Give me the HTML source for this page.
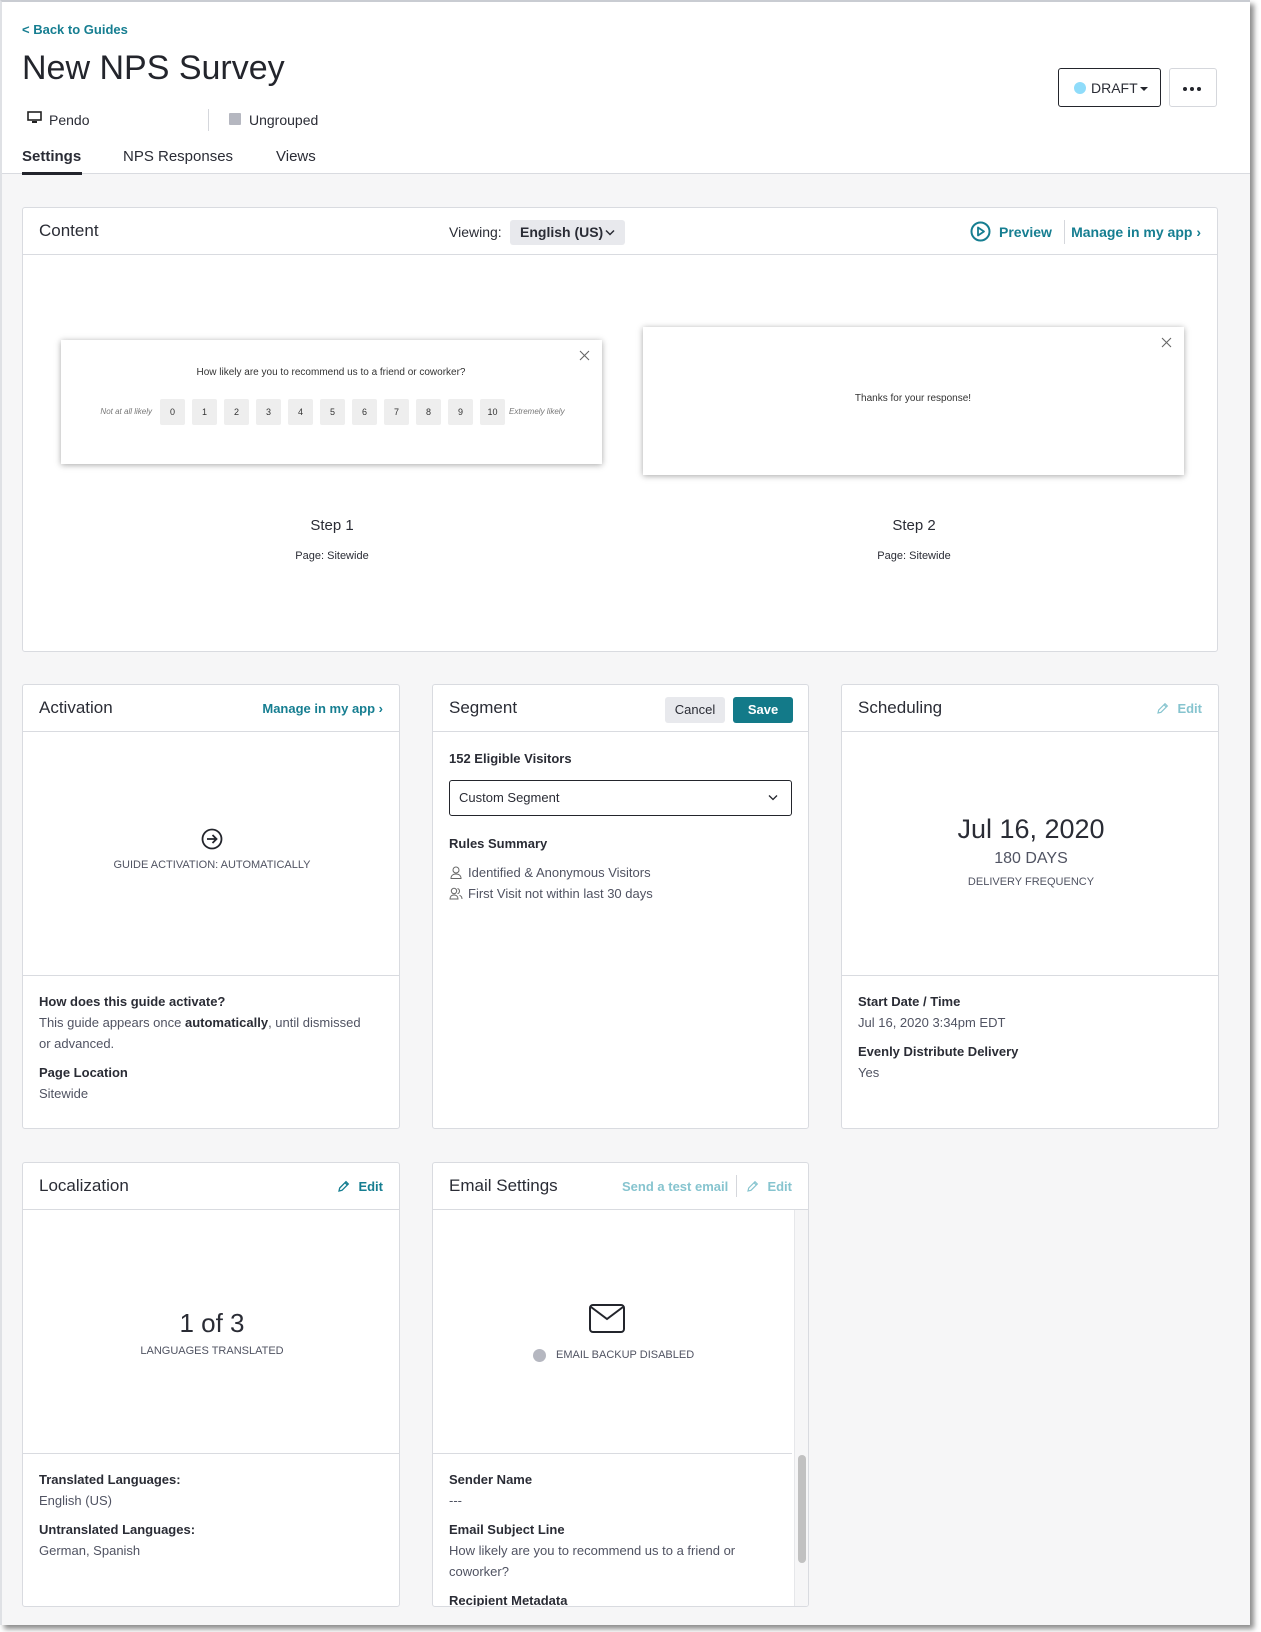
<!DOCTYPE html>
<html><head><meta charset="utf-8"><style>
*{margin:0;padding:0;box-sizing:border-box}
body{width:1261px;height:1632px;background:#fff;font-family:"Liberation Sans",sans-serif;color:#2a2c35;position:relative;overflow:hidden}
#frame{position:absolute;left:0;top:0;width:1250px;height:1625px;background:#f6f6f7;border-top:2px solid #c9ccd2;border-left:2px solid #dfe1e5;box-shadow:4px 4px 5px rgba(0,0,0,.45);overflow:hidden}
#hdr{position:absolute;left:0;top:0;width:100%;height:172px;background:#fff;border-bottom:1px solid #d9dbe0}
.a{position:absolute;white-space:nowrap}
.c{position:absolute;white-space:nowrap;transform:translateX(-50%);text-align:center}
.card{position:absolute;background:#fff;border:1px solid #d9dbe0;border-radius:3px;overflow:hidden}
.ch{position:absolute;left:0;top:0;right:0;height:47px;border-bottom:1px solid #d9dbe0}
.ct{position:absolute;left:16px;top:13px;font-size:17px;line-height:20px}
.teal{color:#167e91;font-weight:bold}
.lt{color:#86c4cf;font-weight:bold}
.b{font-weight:bold;font-size:13px;line-height:20px}
.n{font-size:13px;line-height:20px;color:#505362}
.hr{position:absolute;left:0;right:0;height:1px;background:#d9dbe0}
.modal{position:absolute;background:#fff;box-shadow:0 1px 6px rgba(0,0,0,.35)}
.box{position:absolute;top:59px;width:25px;height:26px;background:#eeeeee;border-radius:2px;font-size:9px;line-height:26px;text-align:center;color:#333}
.dot{position:absolute;top:18px;width:4px;height:4px;border-radius:50%;background:#23252c}
</style></head><body>
<div id="frame">
<div id="hdr">
 <div class="a teal" style="left:20px;top:19px;font-size:13px;line-height:18px">&lt; Back to Guides</div>
 <div class="a" style="left:20px;top:46px;font-size:34px;line-height:40px;color:#23252c">New NPS Survey</div>
 <svg class="a" style="left:25px;top:109px" width="15" height="13" viewBox="0 0 15 13"><rect x="1" y="1" width="13" height="8" fill="none" stroke="#222" stroke-width="1.6"/><rect x="5" y="10" width="5" height="2" fill="#222"/></svg>
 <div class="a" style="left:47px;top:108px;font-size:14px;line-height:20px">Pendo</div>
 <div class="a" style="left:206px;top:107px;width:1px;height:22px;background:#d5d7dc"></div>
 <div class="a" style="left:227px;top:111px;width:12px;height:12px;background:#b5b7c0;border-radius:1px"></div>
 <div class="a" style="left:247px;top:108px;font-size:14px;line-height:20px">Ungrouped</div>
 <div class="a" style="left:20px;top:145px;font-size:15px;line-height:20px;font-weight:bold">Settings</div>
 <div class="a" style="left:20px;top:170px;width:60px;height:3px;background:#23252c"></div>
 <div class="a" style="left:121px;top:145px;font-size:15px;line-height:20px">NPS Responses</div>
 <div class="a" style="left:274px;top:145px;font-size:15px;line-height:20px">Views</div>
 <div class="a" style="left:1056px;top:66px;width:103px;height:39px;border:1px solid #23252c;border-radius:3px"></div>
 <div class="a" style="left:1072px;top:80px;width:12px;height:12px;border-radius:50%;background:#8fdcfa"></div>
 <div class="a" style="left:1089px;top:76px;font-size:14px;line-height:20px">DRAFT</div>
 <div class="a" style="left:1138px;top:85px;border-left:4px solid transparent;border-right:4px solid transparent;border-top:4px solid #23252c"></div>
 <div class="a" style="left:1167px;top:66px;width:48px;height:39px;border:1px solid #d5d7dc;border-radius:3px">
  <div class="dot" style="left:13px"></div><div class="dot" style="left:20px"></div><div class="dot" style="left:27px"></div>
 </div>
</div>

<!-- Content card -->
<div class="card" style="left:20px;top:205px;width:1196px;height:445px">
 <div class="ch"><div class="ct">Content</div>
  <div class="a" style="left:426px;top:15px;font-size:14px;line-height:18px">Viewing:</div>
  <div class="a" style="left:487px;top:12px;width:115px;height:25px;background:#e8e9ed;border-radius:3px;font-size:14px;line-height:25px;padding-left:10px;font-weight:bold;color:#2a2c35">English (US)<svg style="position:absolute;left:95px;top:9px" width="10" height="7" viewBox="0 0 10 7"><path d="M1 1.5l4 4 4-4" fill="none" stroke="#2a2c35" stroke-width="1.5"/></svg></div>
  <svg class="a" style="left:947px;top:13px" width="21" height="21" viewBox="0 0 21 21"><circle cx="10.5" cy="10.5" r="9" fill="none" stroke="#167e91" stroke-width="2"/><path d="M8 6.5v8l6-4z" fill="none" stroke="#167e91" stroke-width="1.8" stroke-linejoin="round"/></svg>
  <div class="a teal" style="left:976px;top:14px;font-size:14px;line-height:20px">Preview</div>
  <div class="a" style="left:1041px;top:12px;width:1px;height:24px;background:#d5d7dc"></div>
  <div class="a teal" style="right:16px;top:14px;font-size:14px;line-height:20px">Manage in my app ›</div>
 </div>
 <div class="modal" style="left:38px;top:132px;width:541px;height:124px">
  <svg class="a" style="left:518px;top:10px" width="11" height="11" viewBox="0 0 11 11"><path d="M1 1l9 9M10 1l-9 9" stroke="#666" stroke-width="1.1"/></svg>
  <div class="c" style="left:270px;top:26px;font-size:10px;line-height:14px;color:#333">How likely are you to recommend us to a friend or coworker?</div>
  <div class="a" style="left:0;width:91px;text-align:right;top:66px;font-size:8px;line-height:12px;font-style:italic;color:#777">Not at all likely</div>
  <div class="box" style="left:99px">0</div><div class="box" style="left:131px">1</div><div class="box" style="left:163px">2</div><div class="box" style="left:195px">3</div><div class="box" style="left:227px">4</div><div class="box" style="left:259px">5</div><div class="box" style="left:291px">6</div><div class="box" style="left:323px">7</div><div class="box" style="left:355px">8</div><div class="box" style="left:387px">9</div><div class="box" style="left:419px">10</div>
  <div class="a" style="left:448px;top:66px;font-size:8px;line-height:12px;font-style:italic;color:#777">Extremely likely</div>
 </div>
 <div class="modal" style="left:620px;top:119px;width:541px;height:148px">
  <svg class="a" style="left:518px;top:10px" width="11" height="11" viewBox="0 0 11 11"><path d="M1 1l9 9M10 1l-9 9" stroke="#666" stroke-width="1.1"/></svg>
  <div class="c" style="left:270px;top:65px;font-size:10px;line-height:14px;color:#333">Thanks for your response!</div>
 </div>
 <div class="c" style="left:309px;top:308px;font-size:15px;line-height:20px">Step 1</div>
 <div class="c" style="left:309px;top:340px;font-size:11px;line-height:16px">Page: Sitewide</div>
 <div class="c" style="left:891px;top:308px;font-size:15px;line-height:20px">Step 2</div>
 <div class="c" style="left:891px;top:340px;font-size:11px;line-height:16px">Page: Sitewide</div>
</div>

<!-- Activation -->
<div class="card" style="left:20px;top:682px;width:378px;height:445px">
 <div class="ch"><div class="ct">Activation</div><div class="a teal" style="right:16px;top:15px;font-size:13px;line-height:18px">Manage in my app ›</div></div>
 <svg class="a" style="left:178px;top:143px" width="22" height="22" viewBox="0 0 22 22"><circle cx="11" cy="11" r="9.5" fill="none" stroke="#23252c" stroke-width="1.8"/><path d="M6 11h9M11.5 7l4 4-4 4" fill="none" stroke="#23252c" stroke-width="1.8"/></svg>
 <div class="c" style="left:189px;top:172px;font-size:11px;line-height:16px;color:#505362">GUIDE ACTIVATION: AUTOMATICALLY</div>
 <div class="hr" style="top:290px"></div>
 <div class="a b" style="left:16px;top:307px">How does this guide activate?</div>
 <div class="a n" style="left:16px;top:328px">This guide appears once <b style="color:#2a2c35">automatically</b>, until dismissed</div>
 <div class="a n" style="left:16px;top:349px">or advanced.</div>
 <div class="a b" style="left:16px;top:378px">Page Location</div>
 <div class="a n" style="left:16px;top:399px">Sitewide</div>
</div>

<!-- Segment -->
<div class="card" style="left:430px;top:682px;width:377px;height:445px">
 <div class="ch"><div class="ct">Segment</div>
  <div class="a" style="left:232px;top:12px;width:60px;height:26px;background:#e8e9ed;border-radius:3px;font-size:13px;line-height:26px;text-align:center">Cancel</div>
  <div class="a" style="left:300px;top:12px;width:60px;height:26px;background:#137a89;border-radius:3px;font-size:13px;line-height:26px;text-align:center;color:#fff;font-weight:bold">Save</div>
 </div>
 <div class="a b" style="left:16px;top:64px">152 Eligible Visitors</div>
 <div class="a" style="left:16px;top:95px;width:343px;height:36px;border:1px solid #23252c;border-radius:3px;font-size:13px;line-height:34px;padding-left:9px">Custom Segment<svg style="position:absolute;left:318px;top:13px" width="10" height="7" viewBox="0 0 10 7"><path d="M1 1.5l4 4 4-4" fill="none" stroke="#23252c" stroke-width="1.3"/></svg></div>
 <div class="a b" style="left:16px;top:149px">Rules Summary</div>
 <svg class="a" style="left:17px;top:181px" width="12" height="13" viewBox="0 0 12 13"><circle cx="6" cy="4" r="3" fill="none" stroke="#666" stroke-width="1"/><path d="M1 12.5c0-3 2.2-4.5 5-4.5s5 1.5 5 4.5z" fill="none" stroke="#666" stroke-width="1"/></svg>
 <div class="a n" style="left:35px;top:178px">Identified &amp; Anonymous Visitors</div>
 <svg class="a" style="left:16px;top:202px" width="14" height="13" viewBox="0 0 14 13"><circle cx="5" cy="4" r="2.7" fill="none" stroke="#666" stroke-width="1"/><path d="M1 12c0-2.6 1.8-4 4-4s4 1.4 4 4z" fill="none" stroke="#666" stroke-width="1"/><path d="M8.5 1.5a2.7 2.7 0 010 5.2M10.5 8.3c1.5.5 2.5 1.7 2.5 3.7" fill="none" stroke="#666" stroke-width="1"/></svg>
 <div class="a n" style="left:35px;top:199px">First Visit not within last 30 days</div>
</div>

<!-- Scheduling -->
<div class="card" style="left:839px;top:682px;width:378px;height:445px">
 <div class="ch"><div class="ct">Scheduling</div>
  <svg class="a" style="left:314px;top:17px" width="13" height="13" viewBox="0 0 13 13"><path d="M2 11l.7-3L9 1.7l2.3 2.3L5 10.3z M8 2.7l2.3 2.3" fill="none" stroke="#86c4cf" stroke-width="1.2"/></svg>
  <div class="a lt" style="right:16px;top:15px;font-size:13px;line-height:18px">Edit</div>
 </div>
 <div class="c" style="left:189px;top:128px;font-size:27px;line-height:32px;color:#2a2c35">Jul 16, 2020</div>
 <div class="c" style="left:189px;top:164px;font-size:16px;line-height:20px;color:#505362">180 DAYS</div>
 <div class="c" style="left:189px;top:189px;font-size:11px;line-height:16px;color:#505362">DELIVERY FREQUENCY</div>
 <div class="hr" style="top:290px"></div>
 <div class="a b" style="left:16px;top:307px">Start Date / Time</div>
 <div class="a n" style="left:16px;top:328px">Jul 16, 2020 3:34pm EDT</div>
 <div class="a b" style="left:16px;top:357px">Evenly Distribute Delivery</div>
 <div class="a n" style="left:16px;top:378px">Yes</div>
</div>

<!-- Localization -->
<div class="card" style="left:20px;top:1160px;width:378px;height:445px">
 <div class="ch"><div class="ct">Localization</div>
  <svg class="a" style="left:314px;top:17px" width="13" height="13" viewBox="0 0 13 13"><path d="M2 11l.7-3L9 1.7l2.3 2.3L5 10.3z M8 2.7l2.3 2.3" fill="none" stroke="#167e91" stroke-width="1.3"/></svg>
  <div class="a teal" style="right:16px;top:15px;font-size:13px;line-height:18px">Edit</div>
 </div>
 <div class="c" style="left:189px;top:144px;font-size:26px;line-height:32px">1 of 3</div>
 <div class="c" style="left:189px;top:180px;font-size:11px;line-height:16px;color:#505362">LANGUAGES TRANSLATED</div>
 <div class="hr" style="top:290px"></div>
 <div class="a b" style="left:16px;top:307px">Translated Languages:</div>
 <div class="a n" style="left:16px;top:328px">English (US)</div>
 <div class="a b" style="left:16px;top:357px">Untranslated Languages:</div>
 <div class="a n" style="left:16px;top:378px">German, Spanish</div>
</div>

<!-- Email -->
<div class="card" style="left:430px;top:1160px;width:377px;height:445px">
 <div class="ch"><div class="ct">Email Settings</div>
  <div class="a lt" style="left:189px;top:15px;font-size:13px;line-height:18px">Send a test email</div>
  <div class="a" style="left:303px;top:12px;width:1px;height:22px;background:#d5d7dc"></div>
  <svg class="a" style="left:313px;top:17px" width="13" height="13" viewBox="0 0 13 13"><path d="M2 11l.7-3L9 1.7l2.3 2.3L5 10.3z M8 2.7l2.3 2.3" fill="none" stroke="#86c4cf" stroke-width="1.2"/></svg>
  <div class="a lt" style="right:16px;top:15px;font-size:13px;line-height:18px">Edit</div>
 </div>
 <div class="a" style="left:361px;top:47px;width:16px;bottom:0;background:#f6f6f7;border-left:1px solid #e6e7ea"></div>
 <div class="a" style="left:365px;top:292px;width:8px;height:108px;background:#c1c1c1;border-radius:4px"></div>
 <svg class="a" style="left:156px;top:141px" width="36" height="29" viewBox="0 0 36 29"><rect x="1" y="1" width="34" height="27" rx="3" fill="none" stroke="#23252c" stroke-width="2"/><path d="M2 3l16 12L34 3" fill="none" stroke="#23252c" stroke-width="2"/></svg>
 <div class="a" style="left:100px;top:186px;width:13px;height:13px;border-radius:50%;background:#b5b7c0"></div>
 <div class="a" style="left:123px;top:184px;font-size:11px;line-height:16px;color:#505362">EMAIL BACKUP DISABLED</div>
 <div class="hr" style="top:290px;right:16px"></div>
 <div class="a b" style="left:16px;top:307px">Sender Name</div>
 <div class="a n" style="left:16px;top:328px">---</div>
 <div class="a b" style="left:16px;top:357px">Email Subject Line</div>
 <div class="a n" style="left:16px;top:378px">How likely are you to recommend us to a friend or</div>
 <div class="a n" style="left:16px;top:399px">coworker?</div>
 <div class="a b" style="left:16px;top:428px">Recipient Metadata</div>
</div>
</div>
</body></html>
